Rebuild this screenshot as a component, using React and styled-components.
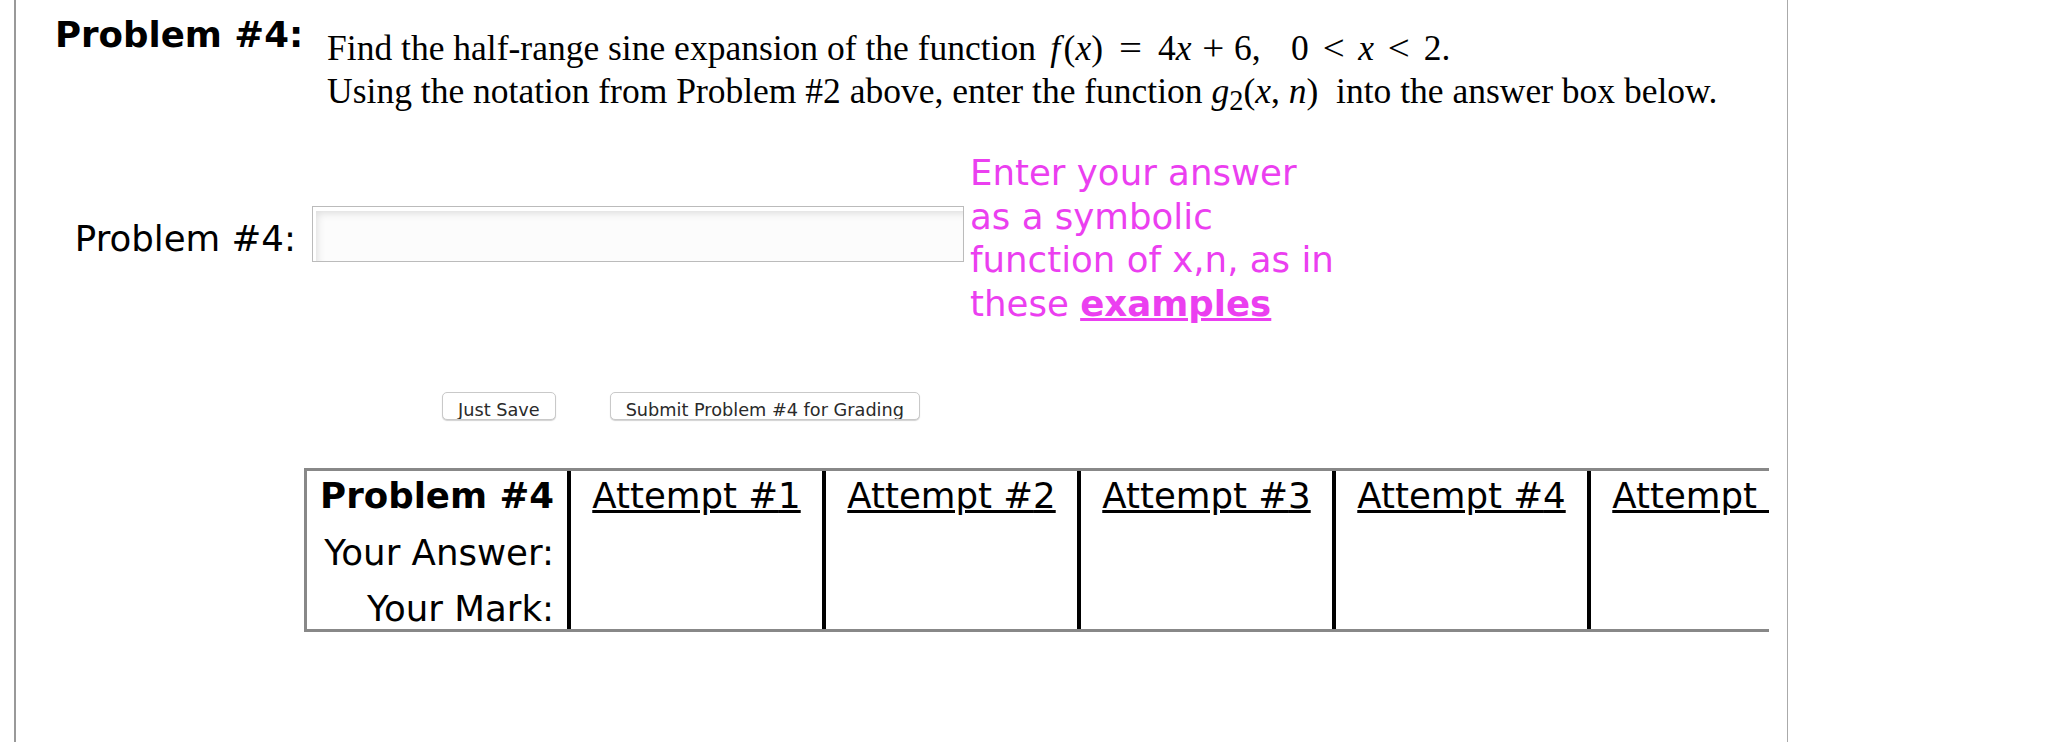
import styled, { createGlobalStyle } from "styled-components";

const GlobalStyle = createGlobalStyle`
    html, body {
        margin: 0;
        padding: 0;
        background: #fff;
    }
    body {
        font-family: "DejaVu Sans", Verdana, sans-serif;
        color: #000;
    }
`;

const Frame = styled.div`
    margin-left: 14px;
    width: 1771px;
    min-height: 100vh;
    border-left: 2px solid #999;
    border-right: 1px solid #aaa;
`;

const Header = styled.div`
    display: flex;
    align-items: flex-start;
    gap: 24px;
    padding: 14px 0 0 39px;
`;

const Title = styled.div`
    font-size: 35.6px;
    font-weight: bold;
    white-space: nowrap;
`;

const Statement = styled.div`
    margin-top: 12.5px;
    font-family: "Liberation Serif", "Times New Roman", serif;
    font-size: 35.5px;
    line-height: 43px;
    white-space: nowrap;
`;

const Line = styled.div``;

const Var = styled.i`
    font-style: italic;
`;

// math operators: a box of fixed width with the glyph centred and stretched a little
const Op = styled.span`
    display: inline-block;
    width: ${(p) => p.$w}em;
    text-align: center;
    transform: scaleX(${(p) => p.$sx || 1});
`;

const Space = styled.span`
    display: inline-block;
    width: ${(p) => p.$w}em;
`;

const Sub = styled.sub`
    font-size: 0.8em;
    vertical-align: -0.25em;
    line-height: 0;
`;

const AnswerRow = styled.div`
    display: flex;
    align-items: center;
    margin-top: 38.5px;
`;

const Label = styled.div`
    width: 296px;
    box-sizing: border-box;
    padding-right: 16px;
    text-align: right;
    font-size: 35.6px;
    white-space: nowrap;
`;

const AnswerBox = styled.div`
    width: 652px;
    height: 56px;
    box-sizing: border-box;
    margin-bottom: 8px;
    padding: 4px 0 0 3px;
    border: 1px solid #bbb;
    background: #fff;
    display: flex;
`;

const AnswerInput = styled.input`
    flex: 1;
    min-width: 0;
    border: none;
    outline: none;
    margin: 0;
    padding: 0 8px;
    background: #fcfcfc;
    box-shadow: inset 4px 5px 8px -3px rgba(0, 0, 0, 0.13);
    font: inherit;
    font-size: 24px;
`;

const Hint = styled.div`
    width: 372px;
    margin-left: 6px;
    font-size: 35.6px;
    line-height: 43.5px;
    color: #eb3ff0;
`;

const HintLink = styled.a`
    color: #eb3ff0;
    font-weight: bold;
    text-decoration: underline;
`;

const ButtonRow = styled.div`
    display: flex;
    gap: 54px;
    margin-top: 67px;
    padding-left: 426px;
`;

const Button = styled.button`
    height: 28px;
    box-sizing: border-box;
    margin: 0;
    padding: 7px 15px 0;
    border: 1px solid #c9c9c9;
    border-radius: 5px;
    background: #fff;
    box-shadow: 0 1px 1px rgba(0, 0, 0, 0.18);
    font-family: "DejaVu Sans", Verdana, sans-serif;
    font-size: 17.7px;
    line-height: 21px;
    color: #2a2a2a;
    white-space: nowrap;
    overflow: hidden;
`;

const TableWrap = styled.div`
    margin: 48px 0 0 288px;
    width: 1465px;
    overflow: hidden;
`;

const Table = styled.table`
    width: 1538px;
    table-layout: fixed;
    border-collapse: separate;
    border-spacing: 0;
    border-top: 3px solid #888;
    border-bottom: 3px solid #888;
    border-left: 3px solid #888;
    font-size: 35.6px;
    line-height: 40px;
`;

const Row = styled.tr`
    height: ${(p) => p.$h}px;
`;

const HeadCell = styled.td`
    width: 260px;
    box-sizing: border-box;
    padding: 5px 13px 0 0;
    vertical-align: top;
    text-align: right;
    white-space: nowrap;
    font-weight: ${(p) => (p.$bold ? "bold" : "normal")};
`;

const AttemptCell = styled.td`
    width: 255px;
    box-sizing: border-box;
    padding: 5px 0 0;
    vertical-align: top;
    text-align: center;
    white-space: nowrap;
    border-left: 4px solid #000;
`;

const AttemptLink = styled.a`
    color: #000;
    text-decoration: underline;
`;

const attempts = [1, 2, 3, 4, 5];

export default function App() {
    return (
        <>
            <GlobalStyle />
            <Frame>
                <Header>
                    <Title>Problem #4:</Title>
                    <Statement>
                        <Line>
                            Find the half-range sine expansion of the function{" "}
                            <Space $w={0.15} />
                            <Var>f</Var>
                            <Space $w={0.1} />(<Var>x</Var>)
                            <Op $w={1.55} $sx={1.15}>=</Op>
                            4<Var>x</Var>
                            <Op $w={1.2} $sx={1.1}>+</Op>
                            6,
                            <Space $w={0.85} />0
                            <Op $w={1.4} $sx={1.1}>&lt;</Op>
                            <Var>x</Var>
                            <Op $w={1.4} $sx={1.1}>&lt;</Op>
                            2.
                        </Line>
                        <Line>
                            Using the notation from Problem #2 above, enter the function{" "}
                            <Var>g</Var><Sub>2</Sub>(<Var>x</Var>, <Var>n</Var>)&nbsp; into the answer box below.
                        </Line>
                    </Statement>
                </Header>

                <AnswerRow>
                    <Label>Problem #4:</Label>
                    <AnswerBox>
                        <AnswerInput type="text" />
                    </AnswerBox>
                    <Hint>
                        Enter your answer as a symbolic function of x,n, as in these{" "}
                        <HintLink href="#">examples</HintLink>
                    </Hint>
                </AnswerRow>

                <ButtonRow>
                    <Button type="button">Just Save</Button>
                    <Button type="button">Submit Problem #4 for Grading</Button>
                </ButtonRow>

                <TableWrap>
                    <Table>
                        <tbody>
                            <Row $h={57}>
                                <HeadCell $bold>Problem #4</HeadCell>
                                {attempts.map((n) => (
                                    <AttemptCell key={n}>
                                        <AttemptLink href="#">Attempt #{n}</AttemptLink>
                                    </AttemptCell>
                                ))}
                            </Row>
                            <Row $h={56}>
                                <HeadCell>Your Answer:</HeadCell>
                                {attempts.map((n) => (
                                    <AttemptCell key={n} />
                                ))}
                            </Row>
                            <Row $h={45}>
                                <HeadCell>Your Mark:</HeadCell>
                                {attempts.map((n) => (
                                    <AttemptCell key={n} />
                                ))}
                            </Row>
                        </tbody>
                    </Table>
                </TableWrap>
            </Frame>
        </>
    );
}
